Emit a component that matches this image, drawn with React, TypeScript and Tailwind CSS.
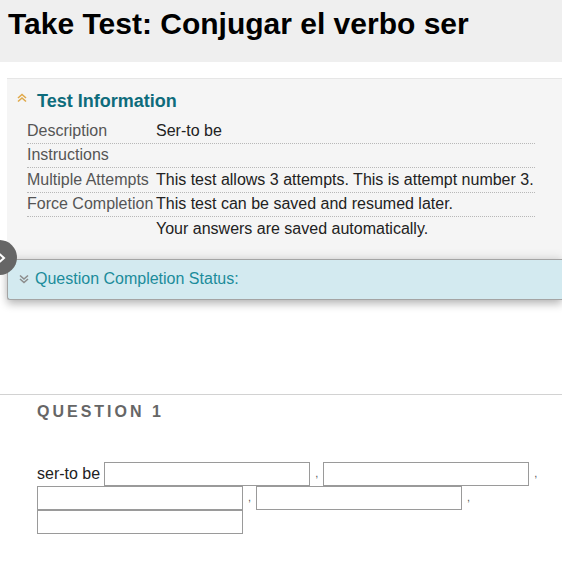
import React from "react";

const rows: { label: string; value: string }[] = [
  { label: "Description", value: "Ser-to be" },
  { label: "Instructions", value: "" },
  { label: "Multiple Attempts", value: "This test allows 3 attempts. This is attempt number 3." },
  { label: "Force Completion", value: "This test can be saved and resumed later." },
  { label: "", value: "Your answers are saved automatically." },
];

function Blank() {
  return <input type="text" className="h-6 w-[206px] border border-[#9a9a9a] bg-white outline-none" />;
}

function Comma() {
  return <span className="mx-[5px] mt-[6px] text-[11px] leading-none text-[#555]">,</span>;
}

export default function App() {
  return (
    <div className="relative min-h-[576px] w-[562px] overflow-hidden bg-white font-['Liberation_Sans',Arial,sans-serif]">
      {/* page header */}
      <div className="h-[62px] bg-[#efefef] pl-2 pt-[5px]">
        <h1 className="text-[30px] font-bold leading-[38px] text-black">Take Test: Conjugar el verbo ser</h1>
      </div>

      {/* test information panel */}
      <div className="ml-[7px] mt-4 border-t border-[#e6e6e6] bg-[#f5f5f5]">
        <div className="flex items-center pl-[10px] pt-[11px]">
          <svg width="10" height="10" viewBox="0 0 10 10" className="-mt-[6px]">
            <path d="M1 5 L5 1.5 L9 5" fill="none" stroke="#e0a94a" strokeWidth="1.6" />
            <path d="M1 8.5 L5 5 L9 8.5" fill="none" stroke="#e0a94a" strokeWidth="1.6" />
          </svg>
          <h2 className="ml-[10px] text-[18px] font-bold leading-[22px] text-[#0e6c7c]">Test Information</h2>
        </div>
        <div className="ml-5 mt-[7px] w-[508px] pb-[17px]">
          {rows.map((r, i) => (
            <div
              key={i}
              className={`flex h-[24.5px] items-center text-[16px] ${i < rows.length - 1 ? "border-b border-dotted border-[#b8b8b8]" : ""}`}
            >
              <span className="w-[129px] shrink-0 text-[#555]">{r.label}</span>
              <span className="text-[#222]">{r.value}</span>
            </div>
          ))}
        </div>

        {/* completion status bar */}
        <div className="flex h-[41px] items-center rounded-bl-[3px] border border-r-0 border-[#a4a4a4] bg-[#d3eaf0] pl-[11px] shadow-[0_4px_8px_rgba(0,0,0,0.28),0_-4px_8px_rgba(0,0,0,0.06)]">
          <svg width="10" height="10" viewBox="0 0 10 10">
            <path d="M1 1.5 L5 5 L9 1.5" fill="none" stroke="#8c8c8c" strokeWidth="1.6" />
            <path d="M1 5 L5 8.5 L9 5" fill="none" stroke="#8c8c8c" strokeWidth="1.6" />
          </svg>
          <span className="ml-[6px] text-[16px] text-[#1b8c9b]">Question Completion Status:</span>
        </div>
      </div>

      {/* side toggle tab */}
      <div className="absolute left-[-18px] top-[240px] flex h-[35px] w-[35px] items-center justify-end rounded-full bg-[#666] pr-[11px]">
        <svg width="8" height="10" viewBox="0 0 8 10">
          <path d="M1.5 1 L6 5 L1.5 9" fill="none" stroke="#fff" strokeWidth="2" />
        </svg>
      </div>

      {/* question */}
      <div className="mt-[94px] border-t border-[#d2d2d2] pl-[37px]">
        <h3 className="mt-[7px] text-[16px] font-bold leading-5 tracking-[3px] text-[#666]">QUESTION 1</h3>
        <div className="mt-[40px] flex w-[512px] flex-wrap items-start text-[16px] text-[#222]">
          <span className="mr-[4px] leading-6">ser-to be</span>
          <Blank />
          <Comma />
          <Blank />
          <Comma />
          <Blank />
          <Comma />
          <Blank />
          <Comma />
          <Blank />
        </div>
      </div>
    </div>
  );
}
